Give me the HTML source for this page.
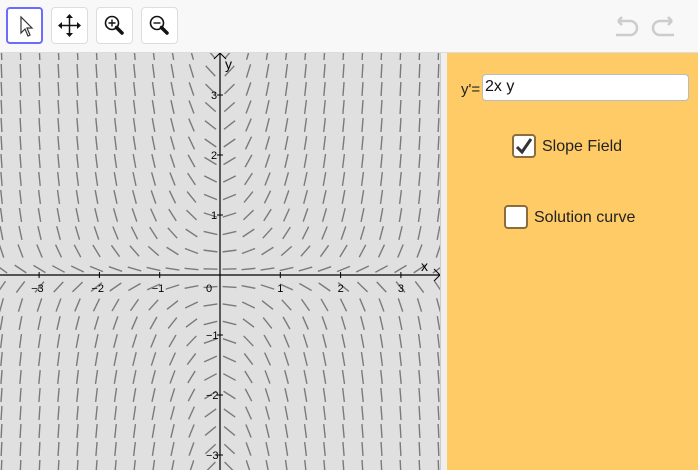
<!DOCTYPE html>
<html><head><meta charset="utf-8"><style>
body{margin:0;width:698px;height:470px;overflow:hidden;background:#fff;font-family:"Liberation Sans",sans-serif;position:relative}
#tb{position:absolute;left:0;top:0;width:698px;height:52px;background:#f8f8f8;border-bottom:1px solid #ddd}
.btn{position:absolute;top:7px;width:37px;height:37px;border:1px solid #ddd;border-radius:4px;background:#fff;box-sizing:border-box}
#gv{position:absolute;left:0;top:53px;width:440px;height:417px;background:#e0e0e0}
#div{position:absolute;left:440px;top:53px;width:7px;height:417px;background:#efefef;border-left:1px solid #ccc;box-sizing:border-box}
#rp{position:absolute;left:447px;top:53px;width:251px;height:417px;background:#fecb66}
.t{position:absolute;font-size:16px;color:#222}
.cb{position:absolute;width:24px;height:24px;border:2px solid #8a6d3b;border-radius:4px;background:#fff;box-sizing:border-box}
</style></head><body>
<div id="tb">
<div class="btn" style="left:6px;border:2px solid #6b6bff"><svg width="33" height="33" viewBox="0 0 33 33"><path d="M13 8 L13 24 L17 20 L20 27 L22 26 L19 19 L24 19 Z" fill="#fff" stroke="#333" stroke-width="1.2"/></svg></div>
<div class="btn" style="left:51px"><svg width="35" height="35" viewBox="0 0 35 35"><path d="M17.5 8 V27 M8 17.5 H27" stroke="#111" stroke-width="1.5"/><path d="M17.5 6 l-3.5 4 h7z M17.5 29 l-3.5 -4 h7z M6 17.5 l4 -3.5 v7z M29 17.5 l-4 -3.5 v7z" fill="#111"/></svg></div>
<div class="btn" style="left:96px"><svg width="35" height="35" viewBox="0 0 35 35"><circle cx="15" cy="15" r="6.5" fill="none" stroke="#111" stroke-width="1.6"/><path d="M15 11.5v7M11.5 15h7" stroke="#111" stroke-width="1.4"/><path d="M19.5 19.5 L25 25" stroke="#111" stroke-width="3.5" stroke-linecap="round"/></svg></div>
<div class="btn" style="left:141px"><svg width="35" height="35" viewBox="0 0 35 35"><circle cx="15" cy="15" r="6.5" fill="none" stroke="#111" stroke-width="1.6"/><path d="M11.5 15h7" stroke="#111" stroke-width="1.4"/><path d="M19.5 19.5 L25 25" stroke="#111" stroke-width="3.5" stroke-linecap="round"/></svg></div>
<svg style="position:absolute;left:610px;top:12px" width="70" height="30" viewBox="0 0 70 30"><path d="M8 9 h12 a7 7 0 0 1 0 14 h-14 M8 9 l4 -4 M8 9 l4 4" fill="none" stroke="#ccc" stroke-width="2.5"/><path d="M62 9 h-12 a7 7 0 0 0 0 14 h14 M62 9 l-4 -4 M62 9 l-4 4" fill="none" stroke="#ccc" stroke-width="2.5"/></svg>
</div>
<div id="gv"></div>
<svg id="sv" style="position:absolute;left:0;top:53px" width="440" height="417"></svg>
<div id="div"></div>
<div id="rp">
<div class="t" style="left:14px;top:28px;font-size:15px">y'=</div>
<div style="position:absolute;left:35px;top:21px;width:207px;height:27px;background:#fff;border:1px solid #bbb;border-radius:4px;box-sizing:border-box;font-size:16px;padding:3px 2px;color:#111">2x y</div>
<div class="cb" style="left:65px;top:81px"><svg width="20" height="20" viewBox="0 0 20 20"><path d="M3 11 L8 16 L17 3" fill="none" stroke="#333" stroke-width="3"/></svg></div>
<div class="t" style="left:95px;top:85px">Slope Field</div>
<div class="cb" style="left:57px;top:152px"></div>
<div class="t" style="left:87px;top:156px">Solution curve</div>
</div>
<script>
var s=document.getElementById('sv'),h='',ox=220,oy=222,u=60;
for(var px=-9.5;px<440;px+=19){for(var py=-6+0;py>-20;py-=18){}}
for(var px=ox-9.5-19*12;px<445;px+=19){if(px<-5)continue;
 for(var py=oy-6-18*12;py<425;py+=18){if(py<-5)continue;
  var x=(px-ox)/u,y=(oy-py)/u,m=2*x*y,L=7,d=Math.sqrt(1+m*m),dx=L/d,dy=-m*L/d;
  h+='<line x1="'+(px-dx)+'" y1="'+(py-dy)+'" x2="'+(px+dx)+'" y2="'+(py+dy)+'" stroke="#7a7a7a" stroke-width="1.4"/>';}}
h+='<line x1="0" y1="'+oy+'" x2="440" y2="'+oy+'" stroke="#000" stroke-width="1.2"/>';
h+='<line x1="'+ox+'" y1="0" x2="'+ox+'" y2="417" stroke="#000" stroke-width="1.2"/>';
h+='<path d="M214 6 L220 0 L226 6 M434 '+(oy-6)+' L440 '+oy+' L434 '+(oy+6)+'" fill="none" stroke="#000"/>';
for(var k=-3;k<=3;k++){if(!k)continue;var X=ox+k*60.3,Y=oy-k*60;
 h+='<line x1="'+X+'" y1="'+(oy-3)+'" x2="'+X+'" y2="'+(oy+3)+'" stroke="#000"/>';
 h+='<text x="'+(X-(k<0?8:3))+'" y="'+(oy+17)+'" font-size="11" font-family="Liberation Sans">'+(k<0?'\u2212'+(-k):k)+'</text>';
 h+='<line x1="'+(ox-3)+'" y1="'+Y+'" x2="'+(ox+3)+'" y2="'+Y+'" stroke="#000"/>';
 h+='<text x="'+(ox-(k<0?14:9))+'" y="'+(Y+4)+'" font-size="11" font-family="Liberation Sans">'+(k<0?'\u2212'+(-k):k)+'</text>';}
h+='<text x="206" y="'+(oy+17)+'" font-size="11" font-family="Liberation Sans">0</text>';
h+='<text x="225" y="16" font-size="14" font-family="Liberation Sans">y</text>';
h+='<text x="421" y="'+(oy-4)+'" font-size="14" font-family="Liberation Sans">x</text>';
s.innerHTML=h;
</script>
</body></html>
